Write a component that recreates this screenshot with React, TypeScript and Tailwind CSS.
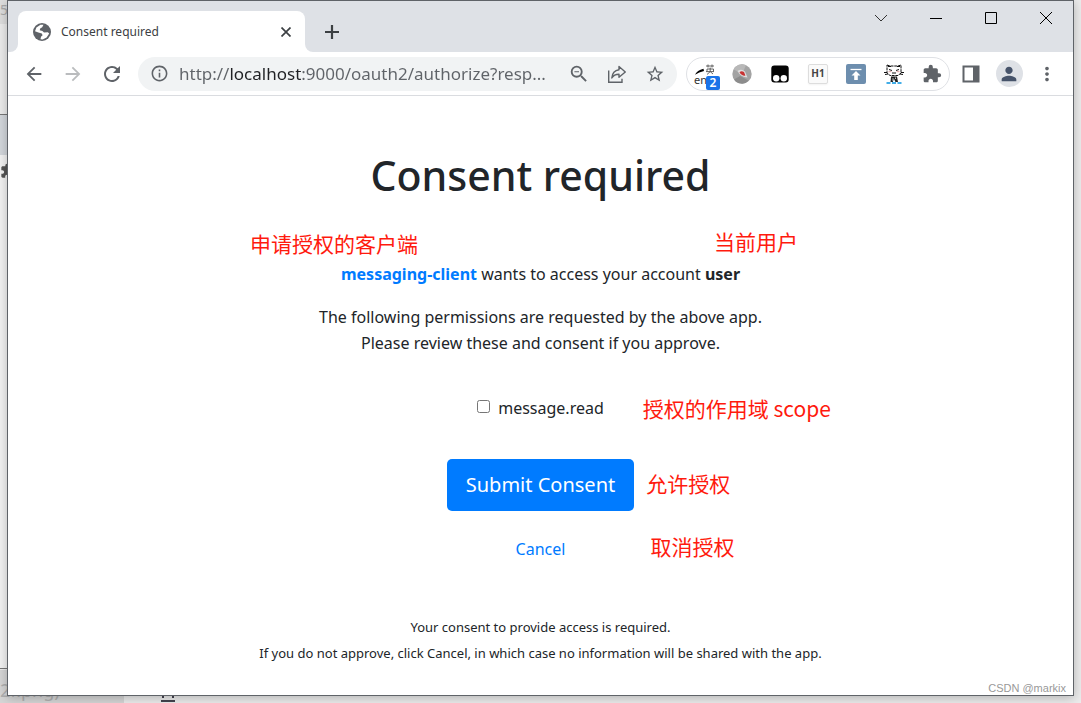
import React from 'react'
import {
  MdArrowBack,
  MdArrowForward,
  MdExtension,
  MdInfoOutline,
  MdMoreVert,
  MdPerson,
  MdRefresh,
  MdStarBorder,
  MdZoomOut,
} from 'react-icons/md'

const iconButton = 'flex size-[38px] shrink-0 items-center justify-center'
const note = "absolute whitespace-nowrap font-['Noto_Sans_CJK_SC',sans-serif] text-[21px] leading-8 text-[#ff1a0e]"

function GlobeIcon() {
  return (
    <svg viewBox="0 0 18 18" className="size-[18px]" aria-hidden="true">
      <circle cx="9" cy="9" r="9" fill="#5f6368" />
      <path d="M7.5 1.8 10.5 1.7 9.2 4.2 7.2 5.4 6.7 7.3 9.4 7.9 11 9.5 14.8 9.2 16.2 10.4 13.6 14.6 9.6 16.4 7.5 16.2 8 13.8 9.6 12.2 8.8 10.4 5.4 9.4 2 8.3 3.4 4.4Z" fill="#fff" />
    </svg>
  )
}

function ShareIcon() {
  return (
    <svg viewBox="0 0 20 20" className="size-5" fill="none" stroke="#5f6368" strokeWidth="1.4" aria-hidden="true">
      <path d="M1.7 6.5V18.2H15V14.8" />
      <path d="M12 2.5 18.3 8 12 13.3V10.2C8.5 10.2 6.3 11.4 4.8 14 5.2 9.3 7.4 6.3 12 5.7Z" strokeLinejoin="round" />
    </svg>
  )
}

function TranslateIcon() {
  return (
    <span className="relative flex size-5 items-end text-[11px] leading-[9px] text-[#333]">
      en
      <svg viewBox="0 0 20 20" className="absolute inset-0 size-5" fill="none" stroke="#555" aria-hidden="true">
        <path d="M1 10.8Q3 6.2 9.5 4.8L10 7Q5 8 1 10.8Z" fill="#000" stroke="none" />
        <path d="M12 2H20M14 .5V3.5M18 .5V3.5M13 5H19.5M13 5V7.5M19.5 5V7.5M12 7.6H20.5M16.2 3.6V7.6L13 10.5M16.2 7.6 19 10" strokeWidth=".9" />
      </svg>
      <span className="absolute top-3 left-3 flex size-[14px] items-center justify-center rounded-xs bg-[#1a73e8] text-[12px] font-semibold text-white">2</span>
    </span>
  )
}

function RecordIcon() {
  return (
    <svg viewBox="0 0 20 20" className="size-5" aria-hidden="true">
      <circle cx="10" cy="10" r="9.7" fill="#a3a3a3" />
      <path d="M10 10 1.5 5.3A9.7 9.7 0 0 1 14 1.2Z" fill="#b8b8b8" />
      <path d="M8 12 16.8 16.8A9.7 9.7 0 0 1 2 15.5Z" fill="#8c8c8c" />
      <path d="M5.5 7Q9.5 4.5 13 7.5L15.5 13.5Q8.5 13 5.5 7Z" fill="#dedede" />
      <path d="M7.5 8.2Q9.5 6.2 12 8L13.4 11.6Q9.6 12 7.5 8.2Z" fill="#c83232" />
    </svg>
  )
}

function MonkeyIcon() {
  return (
    <svg viewBox="0 0 18 18" className="size-[18px]" aria-hidden="true">
      <rect x=".3" y=".5" width="17.4" height="17" rx="3" fill="#050505" />
      <circle cx="5.2" cy="13.2" r="3.2" fill="#fff" />
      <circle cx="12.8" cy="13.2" r="3.2" fill="#fff" />
    </svg>
  )
}

function UploadIcon() {
  return (
    <svg viewBox="0 0 20 20" className="size-5" aria-hidden="true">
      <rect width="20" height="20" rx="2" fill="#6d8eae" />
      <path d="M4.5 5.5H15.5" stroke="#fff" strokeWidth="1.3" />
      <path d="M10 7 14.5 11.5H11.8V16H8.2V11.5H5.5Z" fill="#fff" />
    </svg>
  )
}

function CatIcon() {
  return (
    <svg viewBox="0 0 20 20" className="size-5" aria-hidden="true">
      <path d="M2.5 19H17.5" stroke="#42aee8" strokeWidth="1.8" strokeDasharray="4 1.5" />
      <path d="M3 1 6 2H14L17 1V9L14 11.5H6L3 9Z" fill="#fff" stroke="#111" strokeDasharray="3 .7" />
      <path d="M0 8.5H3M1 10.5 4 10M17 8.5H20M16 10 19 10.5M5 5.5 8 6.5M15 5.5 12 6.5M8 9H12M4 2.5H7M13 2.5H16" stroke="#111" />
      <path d="M7 12.5H13L14 18H11.5L10 15 8.8 18H6.5Z" fill="#222" />
      <path d="M4.5 7.7H7.5M12.5 7.7H15.5" stroke="#e0a0a0" />
      <path d="M9 14V17M11.5 13.5V15" stroke="#fff" strokeWidth=".7" />
    </svg>
  )
}

function SidePanelIcon() {
  return (
    <svg viewBox="0 0 18 18" className="size-[18px]" aria-hidden="true">
      <path d="M1.5 1.5H16.5V16.5H1.5Z" fill="#fff" stroke="#5f6368" strokeWidth="2" />
      <path d="M11 1H17V17H11Z" fill="#5f6368" />
    </svg>
  )
}

const extensions = [
  { name: 'Translate', icon: <TranslateIcon /> },
  { name: 'Recorder', icon: <RecordIcon /> },
  { name: 'Userscripts', icon: <MonkeyIcon /> },
  {
    name: 'Headings',
    icon: (
      <span className="flex size-5 items-center justify-center rounded-xs border border-[#ddd] bg-[#fafafa] text-[10px] font-bold text-[#444] shadow-xs">
        H1
      </span>
    ),
  },
  { name: 'Back to top', icon: <UploadIcon /> },
  { name: 'Octo', icon: <CatIcon /> },
  { name: 'Extensions', icon: <MdExtension className="size-5" /> },
]

// Slices of the windows that sit behind the browser
function Desktop() {
  return (
    <div className="absolute inset-0 overflow-hidden bg-[#ececec]" aria-hidden="true">
      <div className="absolute top-0 left-0 h-6 w-2 bg-[#dedede]" />
      <div className="absolute top-0 left-0 text-[14px] leading-5 text-[#aaa]">5</div>
      <div className="absolute top-[114px] left-0 h-[555px] w-2 border-y border-[#777] bg-[#f3f3f3]">
        <div className="h-10 bg-[#d3d7dc]" />
        <MdExtension className="mt-2 size-4 text-[#555]" />
      </div>
      <div className="absolute top-[670px] left-0 h-9 w-[124px] bg-[#d6d6d6]" />
      <div className="absolute top-[678px] left-0 text-[18px] leading-6 text-[#b0b0b0]">2f.png)</div>
      <svg viewBox="0 0 16 8" className="absolute bottom-0 left-40 h-2 w-4">
        <path d="M3 0V3M13 0V3M1 6H15" stroke="#44444f" strokeWidth="2" />
      </svg>
    </div>
  )
}

function TabStrip() {
  return (
    <div className="flex h-[51px] items-start justify-between bg-[#dee1e6]">
      <div className="flex items-end pt-[10px]">
        <div className="h-[41px] w-[10px] bg-white">
          <div className="h-full rounded-br-[8px] bg-[#dee1e6]" />
        </div>
        <div className="flex h-[41px] w-[287px] items-center rounded-t-[8px] bg-white pr-[7px] pl-[15px]">
          <GlobeIcon />
          <span className="ml-[10px] flex-1 text-[12px] text-[#3c4043]">Consent required</span>
          <button type="button" aria-label="Close tab" className="flex size-6 items-center justify-center">
            <svg viewBox="0 0 10 10" className="size-[10px]" stroke="#3c4043" strokeWidth="1.7">
              <path d="M0.5 0.5 9.5 9.5M9.5 0.5 0.5 9.5" />
            </svg>
          </button>
        </div>
        <div className="h-[41px] w-2 bg-white">
          <div className="h-full rounded-bl-[8px] bg-[#dee1e6]" />
        </div>
        <button type="button" aria-label="New tab" className="flex size-[38px] items-center justify-center self-center">
          <svg viewBox="0 0 14 14" className="size-[14px]" stroke="#3c4043" strokeWidth="2.2">
            <path d="M7 0V14M0 7H14" />
          </svg>
        </button>
      </div>
      <div className="flex h-[34px]">
        <button type="button" aria-label="Search tabs" className="flex w-[55px] items-center justify-center">
          <svg viewBox="0 0 12 12" className="size-3" fill="none" stroke="#333">
            <path d="M0 3 6 9 12 3" />
          </svg>
        </button>
        <button type="button" aria-label="Minimize" className="flex w-[55px] items-center justify-center">
          <svg viewBox="0 0 12 12" className="size-3" fill="none" stroke="#000">
            <path d="M0 6.5H12" />
          </svg>
        </button>
        <button type="button" aria-label="Maximize" className="flex w-[55px] items-center justify-center">
          <svg viewBox="0 0 12 12" className="size-3" fill="none" stroke="#000">
            <path d="M.5 .5H11.5V11.5H.5Z" />
          </svg>
        </button>
        <button type="button" aria-label="Close" className="flex w-[55px] items-center justify-center">
          <svg viewBox="0 0 12 12" className="size-3" fill="none" stroke="#000">
            <path d="M0 0 12 12M12 0 0 12" />
          </svg>
        </button>
      </div>
    </div>
  )
}

function Toolbar() {
  return (
    <div className="flex h-11 items-center border-b border-[#dadce0] bg-white px-[7px] text-[#5f6368]">
      <div className="flex gap-px">
        <button type="button" aria-label="Back" className={iconButton}>
          <MdArrowBack className="size-[22px]" />
        </button>
        <button type="button" aria-label="Forward" className={`${iconButton} text-[#babcbe]`}>
          <MdArrowForward className="size-[22px]" />
        </button>
        <button type="button" aria-label="Reload" className={iconButton}>
          <MdRefresh className="size-6" />
        </button>
      </div>

      {/* Address bar */}
      <div className="ml-[7px] flex h-[34px] min-w-0 flex-1 items-center rounded-full bg-[#f1f3f4] pr-[3px] pl-3">
        <MdInfoOutline className="size-[19px] shrink-0" />
        <input
          type="text"
          aria-label="Address"
          defaultValue="http://localhost:9000/oauth2/authorize?resp..."
          className="ml-[10px] min-w-0 flex-1 bg-[linear-gradient(90deg,#5f6368_51px,#202124_51px,#202124_123px,#5f6368_123px)] bg-clip-text text-[17px] leading-6 text-transparent outline-none"
        />
        <button type="button" aria-label="Zoom" className={iconButton}>
          <MdZoomOut className="size-[22px]" />
        </button>
        <button type="button" aria-label="Share" className={iconButton}>
          <ShareIcon />
        </button>
        <button type="button" aria-label="Bookmark" className={iconButton}>
          <MdStarBorder className="size-5" />
        </button>
      </div>

      {/* Extensions */}
      <div className="ml-[9px] flex h-[34px] shrink-0 items-center gap-1 rounded-full border border-[#dfe1e5]">
        {extensions.map((extension) => (
          <button
            key={extension.name}
            type="button"
            aria-label={extension.name}
            className="flex size-[34px] items-center justify-center"
          >
            {extension.icon}
          </button>
        ))}
      </div>
      <button type="button" aria-label="Side panel" className={`${iconButton} ml-[2px]`}>
        <SidePanelIcon />
      </button>
      <button type="button" aria-label="Profile" className={iconButton}>
        <span className="flex size-[27px] items-center justify-center rounded-full bg-[#dee1e6] text-[#46536a]">
          <MdPerson className="size-[22px]" />
        </span>
      </button>
      <button type="button" aria-label="Menu" className={iconButton}>
        <MdMoreVert className="size-[22px]" />
      </button>
    </div>
  )
}

function ConsentPage() {
  return (
    <main className="flex flex-1 flex-col items-center bg-white px-4 pt-[53px] pb-7 text-center text-[16px] leading-[26px] text-[#212529]">
      <h1 className="text-[41px] leading-[52px] font-medium">Consent required</h1>

      <p className="relative mt-[60px]">
        <a href="#client" className="font-bold text-[#007bff]">messaging-client</a> wants to access your account{' '}
        <strong className="font-bold">user</strong>
        <span className={`${note} bottom-7 -left-[91px]`}>申请授权的客户端</span>
        <span className={`${note} -right-[58px] bottom-[30px]`}>当前用户</span>
      </p>
      <p className="mt-[17px]">
        The following permissions are requested by the above app.
        <br />
        Please review these and consent if you approve.
      </p>

      <form className="mt-[39px] flex flex-col items-center">
        <div className="relative flex items-center gap-2">
          <input type="checkbox" id="message-read" className="mb-1 size-[13px]" />
          <label htmlFor="message-read">message.read</label>
          <span className={`${note} left-full ml-[39px]`}>授权的作用域 scope</span>
        </div>
        <div className="relative mt-[38px] flex items-center">
          <button type="submit" className="h-[52px] rounded-[5px] bg-[#007bff] px-[19px] text-[20px] text-white">
            Submit Consent
          </button>
          <span className={`${note} bottom-3 left-full ml-3`}>允许授权</span>
        </div>
        <div className="relative mt-[25px] flex items-center">
          <button type="button" className="text-[#007bff]">Cancel</button>
          <span className={`${note} bottom-0 left-full ml-[85px]`}>取消授权</span>
        </div>
      </form>

      <p className="mt-[52px] text-[13px]">
        Your consent to provide access is required.
        <br />
        If you do not approve, click Cancel, in which case no information will be shared with the app.
      </p>
    </main>
  )
}

export default function App() {
  return (
    <div className="relative flex min-h-screen flex-col px-[7px] pb-[7px] font-['Noto_Sans','Noto_Sans_CJK_SC',sans-serif]">
      <Desktop />
      <div className="relative flex flex-1 flex-col border border-[#5f6368] shadow-[0_2px_10px_rgba(0,0,0,0.25)]">
        <TabStrip />
        <Toolbar />
        <ConsentPage />
        <div className="absolute right-[7px] bottom-0 font-['Liberation_Sans',sans-serif] text-[11px] leading-[14px] text-[#999]">
          CSDN @markix
        </div>
      </div>
    </div>
  )
}
